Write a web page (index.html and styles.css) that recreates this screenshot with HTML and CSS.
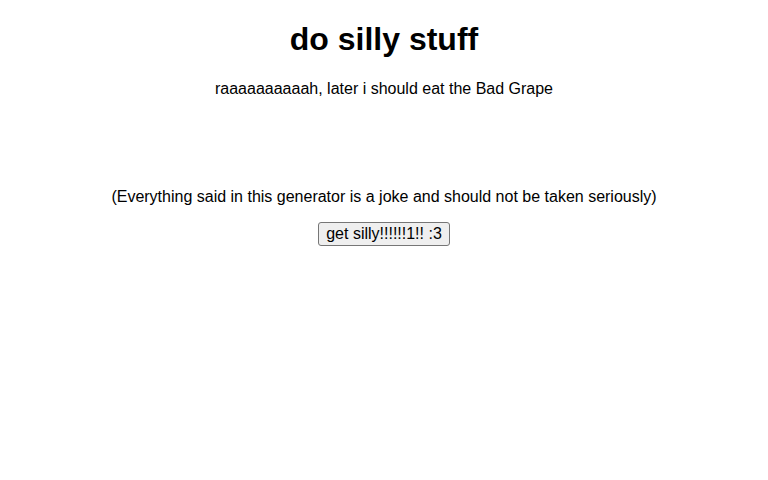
FILE: index.html
```html
<!DOCTYPE html>
<html>
<head>
<meta charset="utf-8">
<link rel="stylesheet" href="styles.css">
</head>
<body>
<main class="page">
  <h1 class="title">do silly stuff</h1>
  <p class="subtitle">raaaaaaaaaah, later i should eat the Bad Grape</p>
  <div class="output"></div>
  <p class="note">(Everything said in this generator is a joke and should not be taken seriously)</p>
  <button class="go">get silly!!!!!!1!! :3</button>
</main>
</body>
</html>
```
FILE: styles.css
```css
html, body {
  margin: 0;
  background: #fff;
}
body {
  font-family: "Liberation Sans", Arial, sans-serif;
  color: #000;
}
.page {
  text-align: center;
  padding: 8px;
}
.title {
  font-size: 32px;
  font-weight: bold;
  margin: 13px 0 0;
  line-height: 37px;
}
.subtitle {
  font-size: 16px;
  margin: 22px 0 0;
  line-height: 18px;
}
.output {
  height: 72px;
}
.note {
  font-size: 16px;
  margin: 18px 0 0;
  line-height: 18px;
}
.go {
  font-family: "Liberation Sans", Arial, sans-serif;
  font-size: 16px;
  line-height: 18px;
  margin-top: 16px;
  padding: 2px 7px;
  background: #efefef;
  border: 1px solid #767676;
  border-radius: 3px;
  color: #000;
}
```
